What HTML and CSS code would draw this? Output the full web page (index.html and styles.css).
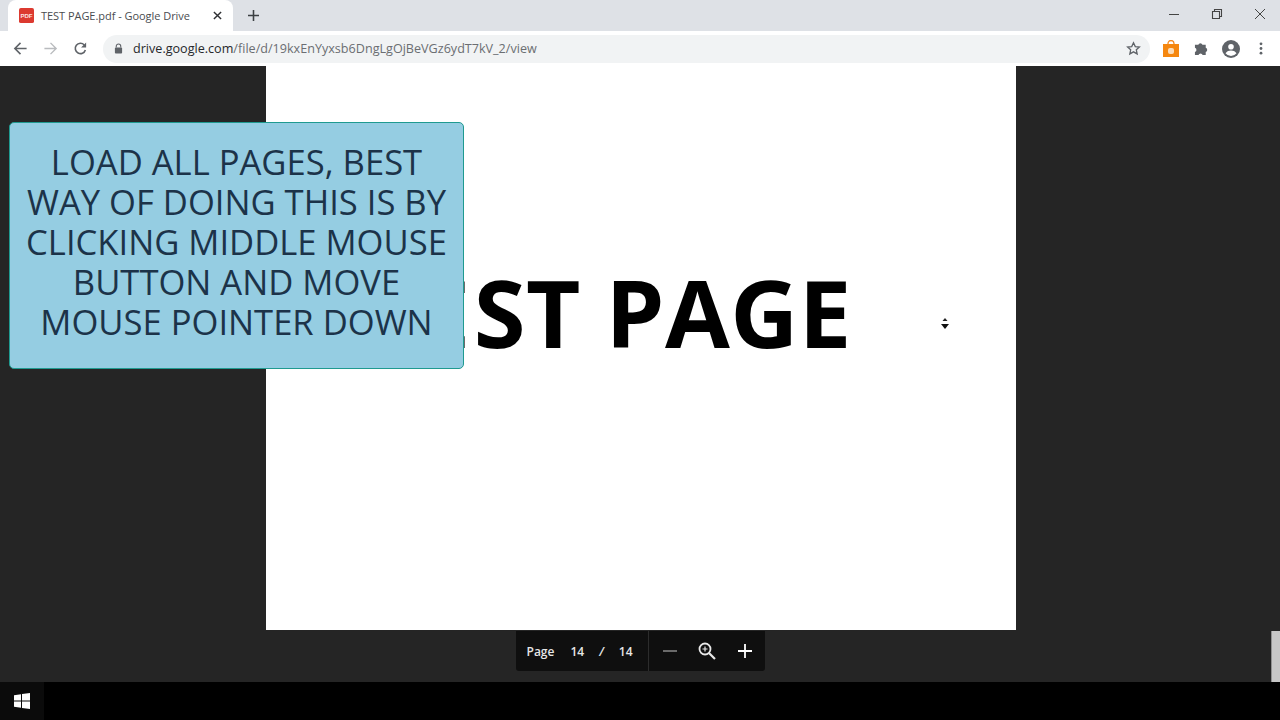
FILE: index.html
```html
<!DOCTYPE html>
<html lang="en">
<head>
<meta charset="utf-8">
<title>TEST PAGE.pdf - Google Drive</title>
<link rel="stylesheet" href="styles.css">
</head>
<body>
<div class="app">
  <header class="tabstrip">
    <div class="tab">
      <svg class="favicon" viewBox="0 0 16 16"><rect width="16" height="16" rx="2" fill="#dc3a30"/><text x="8" y="10.500" text-anchor="middle" class="favicon-text">PDF</text></svg>
      <span class="tab-title">TEST PAGE.pdf - Google Drive</span>
      <svg class="tab-close" viewBox="0 0 10 10"><path d="M1 1l8 8M9 1l-8 8" stroke="#2e3033" stroke-width="1.600" fill="none"/></svg>
    </div>
    <svg class="new-tab" viewBox="0 0 12 12"><path d="M6 0v12M0 6h12" stroke="#3c4043" stroke-width="1.700" fill="none"/></svg>
    <div class="window-controls">
      <svg class="wc" viewBox="0 0 12 12"><path d="M1 6.500h10" stroke="#444" stroke-width="1" fill="none"/></svg>
      <svg class="wc" viewBox="0 0 12 12"><path d="M1.500 3.500h7v7h-7zM3.500 3.500V1.500h7v7h-2" stroke="#444" stroke-width="1.100" fill="none"/></svg>
      <svg class="wc" viewBox="0 0 12 12"><path d="M1 1l10 10M11 1L1 11" stroke="#444" stroke-width="1" fill="none"/></svg>
    </div>
  </header>
  <nav class="toolbar">
    <svg class="nav-icon" viewBox="0 0 16 16"><path d="M14.500 8H2M8 2L2 8l6 6" stroke="#5f6368" stroke-width="1.700" fill="none"/></svg>
    <svg class="nav-icon" viewBox="0 0 16 16"><path d="M1.500 8H14M8 2l6 6-6 6" stroke="#b9bbbe" stroke-width="1.500" fill="none"/></svg>
    <svg class="nav-icon" viewBox="0 0 16 16"><path d="M13.200 9.500A5.500 5.500 0 1 1 12 4.200" stroke="#5f6368" stroke-width="1.700" fill="none"/><path d="M14 1.500V7H8.600z" fill="#5f6368"/></svg>
    <div class="omnibox">
      <svg class="lock" viewBox="0 0 10 12"><path d="M2.500 5V3.500a2.500 2.500 0 0 1 5 0V5" stroke="#5f6368" stroke-width="1.200" fill="none"/><rect x="1" y="5" width="8" height="6.500" rx="1" fill="#5f6368"/></svg>
      <span class="url"><span class="url-host">drive.google.com</span>/file/d/19kxEnYyxsb6DngLgOjBeVGz6ydT7kV_2/view</span>
      <svg class="star" viewBox="0 0 16 16"><path d="M8 1.800l1.900 4.100 4.400.5-3.300 3 .9 4.400L8 11.600l-3.900 2.200.9-4.400-3.300-3 4.400-.5z" stroke="#5f6368" stroke-width="1.400" fill="none"/></svg>
    </div>
    <div class="extensions">
      <svg class="ext-bag" viewBox="0 0 16 17"><path d="M5 5V3.500a3 3 0 0 1 6 0V5" stroke="#f58a1f" stroke-width="1.300" fill="none"/><rect y="4" width="16" height="13" fill="#f5870f"/><rect x="5" y="8" width="6" height="6" rx="2" fill="#fbdcb8"/></svg>
      <svg class="ext-puzzle" viewBox="0 0 16 16"><path d="M1 4h3.600a2.300 2.300 0 0 1 4.400 0H12.500v3.300a2.300 2.300 0 0 1 0 4.400V15H9.200a2.300 2.300 0 0 0-4.400 0H1v-3.300a2.300 2.300 0 0 0 0-4.400z" fill="#5f6368"/></svg>
      <svg class="ext-avatar" viewBox="0 0 18 18"><circle cx="9" cy="9" r="9" fill="#5f6368"/><circle cx="9" cy="6.800" r="2.800" fill="#fff"/><path d="M3.500 13.300c1.400-2 3.500-2.700 5.500-2.700s4.100.7 5.500 2.700A7 7 0 0 1 9 16a7 7 0 0 1-5.500-2.700z" fill="#fff"/></svg>
      <svg class="ext-menu" viewBox="0 0 4 14"><circle cx="2" cy="2" r="1.500" fill="#5f6368"/><circle cx="2" cy="7" r="1.500" fill="#5f6368"/><circle cx="2" cy="12" r="1.500" fill="#5f6368"/></svg>
    </div>
  </nav>
  <main class="viewer">
    <section class="pdf-page">
      <h1 class="pdf-title">T<span class="title-e">E</span>ST PAGE</h1>
      <svg class="scroll-cursor" viewBox="0 0 8 11"><path d="M4 0l2.500 3h-5z" fill="#222"/><path d="M0 6h8L4 11z" fill="#111"/></svg>
    </section>
    <div class="page-bar">
      <div class="page-info">
        <span>Page</span><span class="num">14</span><span class="slash">/</span><span class="num">14</span>
      </div>
      <div class="zoom-tools">
        <svg class="zt" viewBox="0 0 14 14"><path d="M0 7h14" stroke="#8a8a8a" stroke-width="1.500"/></svg>
        <svg class="zt-mag" viewBox="0 0 18 18"><circle cx="7" cy="7" r="5.500" stroke="#e8e8e8" stroke-width="1.800" fill="none"/><path d="M11 11l6 6" stroke="#e8e8e8" stroke-width="2.200"/><path d="M7 4.500v5M4.500 7h5" stroke="#e8e8e8" stroke-width="1.200"/></svg>
        <svg class="zt" viewBox="0 0 14 14"><path d="M7 0v14M0 7h14" stroke="#fff" stroke-width="1.800"/></svg>
      </div>
    </div>
    <aside class="callout">LOAD ALL PAGES, BEST WAY OF DOING THIS IS BY CLICKING MIDDLE MOUSE BUTTON AND MOVE MOUSE POINTER DOWN</aside>
    <div class="scroll-thumb"></div>
  </main>
  <footer class="taskbar">
    <div class="start">
      <svg class="win" viewBox="0 0 16 16"><path d="M0 2.200l7-1v6.400H0zM8 1l8-1v7.600H8zM0 8.500h7v6.300l-7-1zM8 8.500h8V16l-8-1.100z" fill="#fff"/></svg>
    </div>
  </footer>
</div>
</body>
</html>
```
FILE: styles.css
```css
* { box-sizing: border-box; }
html, body { margin: 0; height: 100%; overflow: hidden; }
body { font-family: "Open Sans", "Liberation Sans", sans-serif; }
.app { width: 1280px; height: 720px; display: flex; flex-direction: column; }

.tabstrip { height: 31px; background: #dee1e6; display: flex; align-items: center; padding-left: 8px; }
.tab { width: 225px; height: 31px; background: #fff; border-radius: 8px 8px 0 0; display: flex; align-items: center; padding-left: 11px; }
.favicon { width: 15px; height: 15px; flex: none; }
.favicon-text { font-family: "Liberation Sans", sans-serif; font-size: 6.500px; font-weight: 700; fill: #fbe3e0; }
.tab-title { margin-left: 7px; font-size: 11px; letter-spacing: -0.04px; color: #4a4c50; white-space: nowrap; width: 172px; }
.tab-close { width: 9px; height: 9px; }
.new-tab { width: 11px; height: 11px; margin-left: 15px; }
.window-controls { margin-left: auto; display: flex; gap: 31px; padding-right: 14px; margin-top: -4px; }
.wc { width: 12px; height: 12px; }

.toolbar { height: 35px; background: #fff; display: flex; align-items: center; padding-left: 13px; }
.nav-icon { width: 15px; height: 15px; margin-right: 15px; flex: none; }
.omnibox { width: 1047px; height: 28px; background: #f1f3f4; border-radius: 14px; display: flex; align-items: center; padding: 0 9px 0 11px; }
.lock { width: 9px; height: 11px; flex: none; }
.url { margin-left: 10px; font-size: 12.6px; color: #6b6e72; white-space: nowrap; }
.url-host { color: #26282b; }
.star { width: 15px; height: 15px; margin-left: auto; }
.extensions { display: flex; align-items: center; margin-left: 13px; }
.ext-bag { width: 16px; height: 17px; }
.ext-puzzle { width: 15px; height: 15px; margin-left: 15px; }
.ext-avatar { width: 18px; height: 18px; margin-left: 13px; }
.ext-menu { width: 4px; height: 13px; margin-left: 19px; }

.viewer { position: relative; flex: 1; background: #252525; display: flex; flex-direction: column; align-items: center; }
.pdf-page { position: relative; width: 750px; height: 564px; margin-left: 2px; background: #fff; display: flex; align-items: center; justify-content: center; padding: 0 67.5px 73px 0; }
.pdf-title { margin: 0; font-size: 94px; font-weight: 700; line-height: 1; color: #000; white-space: nowrap; letter-spacing: 0.4px; }
.title-e { letter-spacing: 3.5px; }
.scroll-cursor { position: absolute; left: 675px; top: 252px; width: 8px; height: 11px; }

.page-bar { width: 249px; height: 40px; margin-top: 1px; background: #0f0f0f; border-radius: 0 0 3px 3px; display: flex; align-items: center; color: #e6e6e6; font-size: 12px; font-weight: 600; }
.page-info { width: 133px; height: 100%; display: flex; align-items: center; padding-left: 11px; border-right: 1px solid #2c2c2c; }
.num { margin-left: 16px; }
.slash { margin-left: 15px; margin-right: -1px; font-style: italic; }
.zoom-tools { flex: 1; display: flex; align-items: center; padding-left: 14px; }
.zt { width: 14px; height: 14px; flex: none; }
.zt-mag { width: 18px; height: 18px; margin: -2px 22px -2px 21px; flex: none; }

.callout { position: absolute; left: 9px; top: 56px; width: 455px; height: 247px; background: #95cde2; border: 1px solid #1f9a90; border-radius: 5px; color: #1c3349; font-size: 34.600px; line-height: 40px; text-align: center; padding: 19px 5px 0; }
.scroll-thumb { position: absolute; right: 0; bottom: 0; width: 9px; height: 51px; background: #c6c6c6; border-left: 1px solid #8f8f8f; }

.taskbar { height: 38px; background: #000; display: flex; }
.start { width: 44px; background: #0b0b0b; display: flex; align-items: center; justify-content: center; }
.win { width: 16px; height: 16px; }
```
